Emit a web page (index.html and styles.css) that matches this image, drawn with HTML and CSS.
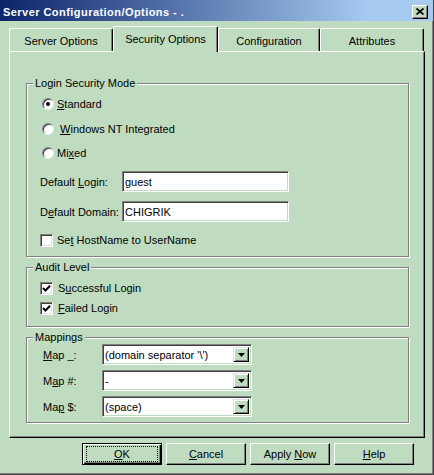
FILE: index.html
```html
<!DOCTYPE html>
<html>
<head>
<meta charset="utf-8">
<link rel="stylesheet" href="styles.css">
</head>
<body>
<div class="window">
  <div class="titlebar">
    <span class="title">Server Configuration/Options - .</span>
    <span class="close"><svg width="8" height="7" viewBox="0 0 8 7"><path d="M0.5 0.5 L7.5 6.5 M7.5 0.5 L0.5 6.5" stroke="#000" stroke-width="1.7" fill="none"/></svg></span>
  </div>
  <div class="tabs">
    <div class="tab t1">Server Options</div>
    <div class="tab t2 selected">Security Options</div>
    <div class="tab t3">Configuration</div>
    <div class="tab t4">Attributes</div>
  </div>
  <div class="panel">
    <div class="group login">
      <div class="group-title">Login Security Mode</div>
      <div class="opt first"><span class="radio on"></span><span><u>S</u>tandard</span></div>
      <div class="opt mid"><span class="radio"></span><span>&nbsp;<u>W</u>indows NT Integrated</span></div>
      <div class="opt last"><span class="radio"></span><span>Mi<u>x</u>ed</span></div>
      <div class="field f1"><span class="flabel">Default <u>L</u>ogin:</span><span class="input">guest</span></div>
      <div class="field f2"><span class="flabel">D<u>e</u>fault Domain:</span><span class="input">CHIGRIK</span></div>
      <div class="chk hostname"><span class="check"></span><span>Se<u>t</u> HostName to UserName</span></div>
    </div>
    <div class="group audit">
      <div class="group-title">Audit Level</div>
      <div class="chk first"><span class="check"><svg width="9" height="9" viewBox="0 0 9 9"><path d="M1 4 L3.5 6.5 L8 1.8" stroke="#000" stroke-width="2" fill="none"/></svg></span><span>S<u>u</u>ccessful Login</span></div>
      <div class="chk"><span class="check"><svg width="9" height="9" viewBox="0 0 9 9"><path d="M1 4 L3.5 6.5 L8 1.8" stroke="#000" stroke-width="2" fill="none"/></svg></span><span><u>F</u>ailed Login</span></div>
    </div>
    <div class="group mappings">
      <div class="group-title">Mappings</div>
      <div class="map first"><span class="mlabel"><u>M</u>ap _:</span><span class="combo"><span class="ctext">(domain separator '\')</span><span class="drop"><svg width="7" height="4" viewBox="0 0 7 4"><path d="M0 0 H7 L3.5 4 Z" fill="#000"/></svg></span></span></div>
      <div class="map"><span class="mlabel">M<u>a</u>p #:</span><span class="combo"><span class="ctext">-</span><span class="drop"><svg width="7" height="4" viewBox="0 0 7 4"><path d="M0 0 H7 L3.5 4 Z" fill="#000"/></svg></span></span></div>
      <div class="map"><span class="mlabel">Ma<u>p</u> $:</span><span class="combo"><span class="ctext">(space)</span><span class="drop"><svg width="7" height="4" viewBox="0 0 7 4"><path d="M0 0 H7 L3.5 4 Z" fill="#000"/></svg></span></span></div>
    </div>
  </div>
  <div class="buttons">
    <div class="btn default"><span class="focus"><u>O</u>K</span></div>
    <div class="btn"><span><u>C</u>ancel</span></div>
    <div class="btn"><span>Apply <u>N</u>ow</span></div>
    <div class="btn"><span><u>H</u>elp</span></div>
  </div>
</div>
</body>
</html>
```
FILE: styles.css
```css
body {
  margin: 0;
  font-family: "Liberation Sans", Arial, sans-serif;
  font-size: 11px;
  color: #000;
}
u { text-decoration: underline; text-underline-offset: 1px; }

.window {
  width: 434px;
  height: 475px;
  box-sizing: border-box;
  background: #c0dcc0;
  border-right: 1px solid #404040;
  border-bottom: 1px solid #404040;
  box-shadow: inset -1px -1px #808080;
  overflow: hidden;
}

.titlebar {
  height: 21px;
  box-sizing: border-box;
  padding: 2px 5px 0 3px;
  display: flex;
  align-items: center;
  justify-content: space-between;
  background: linear-gradient(to right, #0a246a 0%, #a6caf0 85%, #a6caf0 100%);
}
.title {
  color: #fff;
  font-weight: bold;
  font-size: 11px;
  letter-spacing: 0.45px;
}
.close {
  width: 16px;
  height: 14px;
  box-sizing: border-box;
  background: #c0dcc0;
  border: 1px solid;
  border-color: #fff #000 #000 #fff;
  box-shadow: inset -1px -1px #808080;
  display: flex;
  align-items: center;
  justify-content: center;
}
.close svg { display: block; margin-top: -1px; }

.tabs {
  display: flex;
  align-items: flex-end;
  height: 25px;
  margin-top: 5px;
  padding-left: 9px;
  position: relative;
  z-index: 1;
}
.tab {
  height: 23px;
  box-sizing: border-box;
  padding-top: 2px;
  border-left: 1px solid #fff;
  border-top: 1px solid #fff;
  border-right: 1px solid #000;
  box-shadow: inset -1px 0 #808080;
  border-radius: 2px 2px 0 0;
  display: flex;
  align-items: center;
  justify-content: center;
  background: #c0dcc0;
}
.t1 { width: 104px; }
.t2 { width: 105px; }
.t3 { width: 102px; }
.t4 { width: 104px; }
.tab.selected {
  height: 26px;
  margin-bottom: -1px;
  padding-top: 0;
  padding-bottom: 2px;
}

.panel {
  margin-left: 9px;
  width: 416px;
  height: 387px;
  box-sizing: border-box;
  border-top: 1px solid #fff;
  border-left: 1px solid #fff;
  border-right: 1px solid #000;
  border-bottom: 1px solid #000;
  box-shadow: inset -1px -1px #808080;
  padding: 31px 0 0 16px;
}

.group {
  width: 383px;
  box-sizing: border-box;
  border: 1px solid #808080;
  box-shadow: inset 1px 1px #fff, 1px 1px #fff;
  padding-left: 13px;
}
.group + .group { margin-top: 10px; }
.login { padding-bottom: 6px; }
.audit { padding-bottom: 8px; }
.mappings { padding-bottom: 5px; }

.group-title {
  margin-top: -7px;
  margin-left: -7px;
  height: 13px;
  line-height: 13px;
  padding: 0 2px;
  width: fit-content;
  background: #c0dcc0;
}

.opt {
  height: 24px;
  margin-left: 2px;
  display: flex;
  align-items: center;
  gap: 3px;
}
.opt.first { margin-top: 2px; }
.opt.mid { height: 26px; }
.opt.last { height: 22px; }

.radio {
  width: 12px;
  height: 12px;
  box-sizing: border-box;
  border-radius: 50%;
  background: #fff;
  border: 1px solid;
  border-color: #808080 #e8f0e8 #e8f0e8 #808080;
  box-shadow: inset 1px 1px #404040;
  display: flex;
  align-items: center;
  justify-content: center;
}
.radio.on::after {
  content: "";
  width: 4px;
  height: 4px;
  border-radius: 50%;
  background: #000;
}

.field {
  height: 21px;
  display: flex;
  align-items: center;
}
.f1 { margin-top: 7px; }
.f2 { margin-top: 9px; }
.flabel { width: 82px; }
.input {
  width: 167px;
  height: 21px;
  box-sizing: border-box;
  background: #fff;
  border: 1px solid;
  border-color: #808080 #fff #fff #808080;
  box-shadow: inset 1px 1px #404040, inset -1px -1px #c0dcc0;
  padding-left: 2px;
  display: flex;
  align-items: center;
}

.chk {
  height: 20px;
  display: flex;
  align-items: center;
  gap: 4px;
}
.hostname { margin-top: 8px; }
.audit .chk.first { margin-top: 4px; }
.audit .chk { gap: 5px; }

.check {
  width: 13px;
  height: 13px;
  box-sizing: border-box;
  background: #fff;
  border: 1px solid;
  border-color: #808080 #fff #fff #808080;
  box-shadow: inset 1px 1px #404040, inset -1px -1px #dfdfdf;
  display: flex;
  align-items: center;
  justify-content: center;
}
.check svg { display: block; }

.map {
  height: 21px;
  display: flex;
  align-items: center;
}
.map + .map { margin-top: 5px; }
.mlabel { width: 62px; padding-left: 3px; box-sizing: border-box; }
.combo {
  width: 150px;
  height: 21px;
  box-sizing: border-box;
  background: #fff;
  border: 1px solid;
  border-color: #808080 #fff #fff #808080;
  box-shadow: inset 1px 1px #404040, inset -1px -1px #c0dcc0;
  padding: 2px;
  display: flex;
  align-items: stretch;
}
.ctext {
  flex: 1;
  display: flex;
  align-items: center;
}
.drop {
  width: 16px;
  box-sizing: border-box;
  background: #c0dcc0;
  border: 1px solid;
  border-color: #dfdfdf #000 #000 #dfdfdf;
  box-shadow: inset 1px 1px #fff, inset -1px -1px #808080;
  display: flex;
  align-items: center;
  justify-content: center;
}
.drop svg { display: block; }

.buttons {
  margin-top: 5px;
  padding-right: 19px;
  display: flex;
  justify-content: flex-end;
  gap: 4px;
}
.btn {
  width: 80px;
  height: 22px;
  box-sizing: border-box;
  background: #c0dcc0;
  border: 1px solid;
  border-color: #fff #000 #000 #fff;
  box-shadow: inset -1px -1px #808080;
  display: flex;
  align-items: center;
  justify-content: center;
}
.btn.default {
  border: 1px solid #000;
  box-shadow: inset 1px 1px #fff, inset -1px -1px #000, inset -2px -2px #808080;
}
.focus {
  width: 72px;
  height: 16px;
  box-sizing: border-box;
  border: 1px dotted #000;
  display: flex;
  align-items: center;
  justify-content: center;
}
```
